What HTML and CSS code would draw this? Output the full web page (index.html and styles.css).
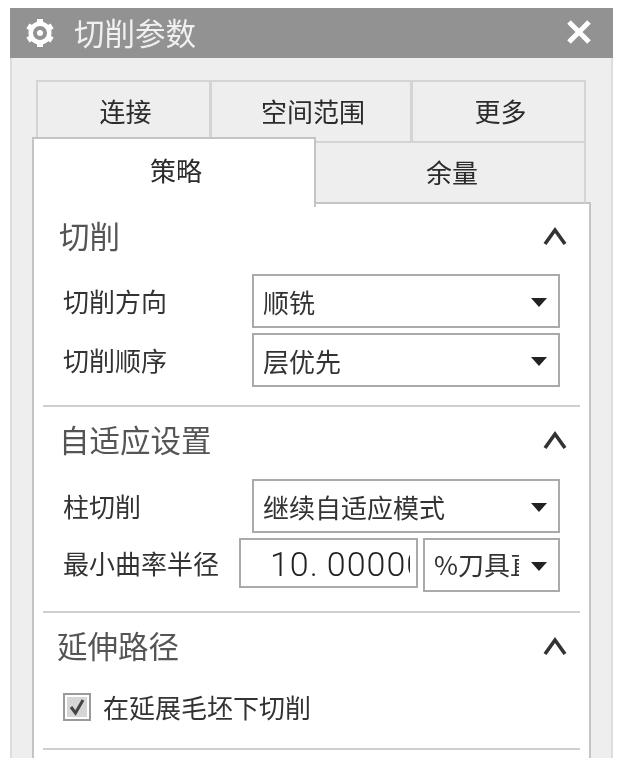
FILE: index.html
```html
<!DOCTYPE html>
<html lang="zh-CN">
<head>
<meta charset="utf-8">
<title>切削参数</title>
<link rel="stylesheet" href="styles.css">
</head>
<body>
<div class="dialog">
  <header class="titlebar">
    <svg class="gear" viewBox="0 0 30 30"><g fill="#fff"><circle cx="15" cy="15" r="11.500"/><rect x="12" y="1" width="6" height="28"/><rect x="12" y="1" width="6" height="28" transform="rotate(60 15 15)"/><rect x="12" y="1" width="6" height="28" transform="rotate(120 15 15)"/></g><circle cx="15" cy="15" r="7" fill="#929292"/><circle cx="15" cy="15" r="3" fill="#fff"/></svg>
    <span class="title">切削参数</span>
    <svg class="close" viewBox="0 0 24 24"><path d="M2 2 22 22M22 2 2 22" stroke="#fff" stroke-width="5" fill="none"/></svg>
  </header>
  <div class="body">
    <div class="tabs">
      <div class="tabrow top">
        <div class="tab t1">连接</div>
        <div class="tab t2">空间范围</div>
        <div class="tab t3">更多</div>
      </div>
      <div class="tabrow bottom">
        <div class="tab active">策略</div>
        <div class="tab t4">余量</div>
      </div>
    </div>
    <main class="panel">
      <section class="section">
        <div class="head"><span class="heading">切削</span><svg class="chev" viewBox="0 0 26 20"><path d="M3 18 13 4 23 18" stroke="#333" stroke-width="3.6" fill="none"/></svg></div>
        <div class="rows">
          <div class="row"><span class="label">切削方向</span><div class="select wide"><span class="value">顺铣</span><i class="caret"></i></div></div>
          <div class="row"><span class="label">切削顺序</span><div class="select wide"><span class="value">层优先</span><i class="caret"></i></div></div>
        </div>
      </section>
      <section class="section">
        <div class="head"><span class="heading">自适应设置</span><svg class="chev" viewBox="0 0 26 20"><path d="M3 18 13 4 23 18" stroke="#333" stroke-width="3.6" fill="none"/></svg></div>
        <div class="rows">
          <div class="row"><span class="label">柱切削</span><div class="select wide"><span class="value">继续自适应模式</span><i class="caret"></i></div></div>
          <div class="row"><span class="label short">最小曲率半径</span><div class="number"><span class="digits">10<span class="dot">.</span>00000</span></div><div class="select unit"><span class="value clip">%刀具直径</span><i class="caret"></i></div></div>
        </div>
      </section>
      <section class="section">
        <div class="head"><span class="heading tight">延伸路径</span><svg class="chev" viewBox="0 0 26 20"><path d="M3 18 13 4 23 18" stroke="#333" stroke-width="3.6" fill="none"/></svg></div>
        <div class="check-row">
          <svg class="check" viewBox="0 0 28 28"><rect x="1" y="1" width="26" height="26" fill="#fff" stroke="#9a9a9a" stroke-width="2"/><rect x="4" y="4" width="20" height="20" fill="#d6d6d6"/><path d="M8 14 12.500 20 20 7" stroke="#444" stroke-width="3" fill="none"/></svg>
          <span class="label">在延展毛坯下切削</span>
        </div>
      </section>
    </main>
  </div>
</div>
</body>
</html>
```

FILE: styles.css
```css
* { box-sizing: border-box; }
html, body { margin: 0; background: #fff; }
body { font-family: "Noto Sans CJK SC", "Liberation Sans", sans-serif; color: #2b2b2b; }

.dialog {
  width: 603px;
  height: 750px;
  margin: 8px 0 0 10px;
  overflow: hidden;
  filter: blur(0.5px);
}

.titlebar {
  height: 50px;
  padding: 0 22px 0 15px;
  background: #929292;
  display: flex;
  align-items: center;
}
.gear { width: 30px; height: 30px; flex: none; }
.title { margin-left: 19px; margin-top: -2px; font-size: 30.500px; line-height: 50px; color: #f0f0f0; }
.close { width: 24px; height: 24px; margin-left: auto; margin-top: -2px; }

.body {
  height: 700px;
  background: #eeeeee;
  border-left: 2px solid #dddddd;
  border-right: 2px solid #dddddd;
}

.tabs { padding: 22px 0 0 24px; }
.tabrow { display: flex; font-size: 26px; }
.tab { display: flex; align-items: center; justify-content: center; padding-left: 4px; }
.top { width: 550px; height: 61px; border: 2px solid #d4d4d4; border-bottom: 0; }
.top .tab { padding-bottom: 2px; }
.t1 { width: 174px; border-right: 3px solid #d4d4d4; }
.t2 { width: 201px; border-right: 3px solid #d4d4d4; }
.t3 { flex: 1; }
.bottom { height: 62px; width: 550px; }
.active {
  position: relative;
  z-index: 1;
  width: 284px;
  height: 70px;
  margin: -4px 0 0 -4px;
  padding-bottom: 8px;
  background: #fff;
  border: 2px solid #c4c4c4;
  border-bottom: 0;
}
.t4 { flex: 1; border: 2px solid #d4d4d4; border-left: 0; border-bottom: 0; padding-bottom: 4px; }

.panel {
  width: 559px;
  height: 560px;
  margin: -1px 0 0 20px;
  background: #fff;
  border: 2px solid #c4c4c4;
  border-bottom: 0;
}
.section { margin: 0 9px; border-bottom: 2px solid #cfcfcf; padding-bottom: 19px; }
.section:first-child { padding-bottom: 18px; }
.head {
  height: 70px;
  padding: 0 12px 8px 16px;
  display: flex;
  align-items: center;
  justify-content: space-between;
}
.section + .section .head { height: 72px; padding-bottom: 8px; }
.heading { font-size: 30.500px; color: #555; }
.tight { margin-left: -2px; }
.chev { width: 26px; height: 20px; margin-top: 1px; }

.rows { display: flex; flex-direction: column; gap: 5px; padding: 0 20px; }
.row { display: flex; align-items: flex-start; }
.label { font-size: 26px; line-height: 54px; color: #333; }
.short { line-height: 50px; }
.select {
  height: 54px;
  margin-left: auto;
  border: 2px solid #aaaaaa;
  display: flex;
  align-items: center;
  justify-content: space-between;
  padding: 0 11px 0 9px;
  font-size: 26px;
}
.wide { width: 308px; }
.row .unit { width: 137px; margin-left: 5px; padding-bottom: 3px; }
.value { white-space: nowrap; color: #333; }
.clip { width: 85px; overflow: hidden; }
.caret {
  width: 0;
  height: 0;
  margin-top: 2px;
  border-left: 8px solid transparent;
  border-right: 8px solid transparent;
  border-top: 9px solid #222;
}
.unit .caret { margin-top: 6px; }
.number {
  width: 179px;
  height: 50px;
  margin-left: auto;
  border: 2px solid #aaaaaa;
  padding: 2px 6px 0 29px;
  display: flex;
  align-items: center;
  overflow: hidden;
}
.digits {
  font-family: Roboto, "Liberation Sans", sans-serif;
  font-weight: 300;
  font-size: 34px;
  letter-spacing: 1px;
  white-space: pre;
  display: block;
  overflow: hidden;
  width: 100%;
  color: #222;
}
.dot { margin-right: 8px; }

.check-row { height: 44px; padding-left: 20px; display: flex; align-items: center; gap: 12px; }
.check { width: 28px; height: 28px; flex: none; }
.check-row .label { line-height: 44px; }
```
